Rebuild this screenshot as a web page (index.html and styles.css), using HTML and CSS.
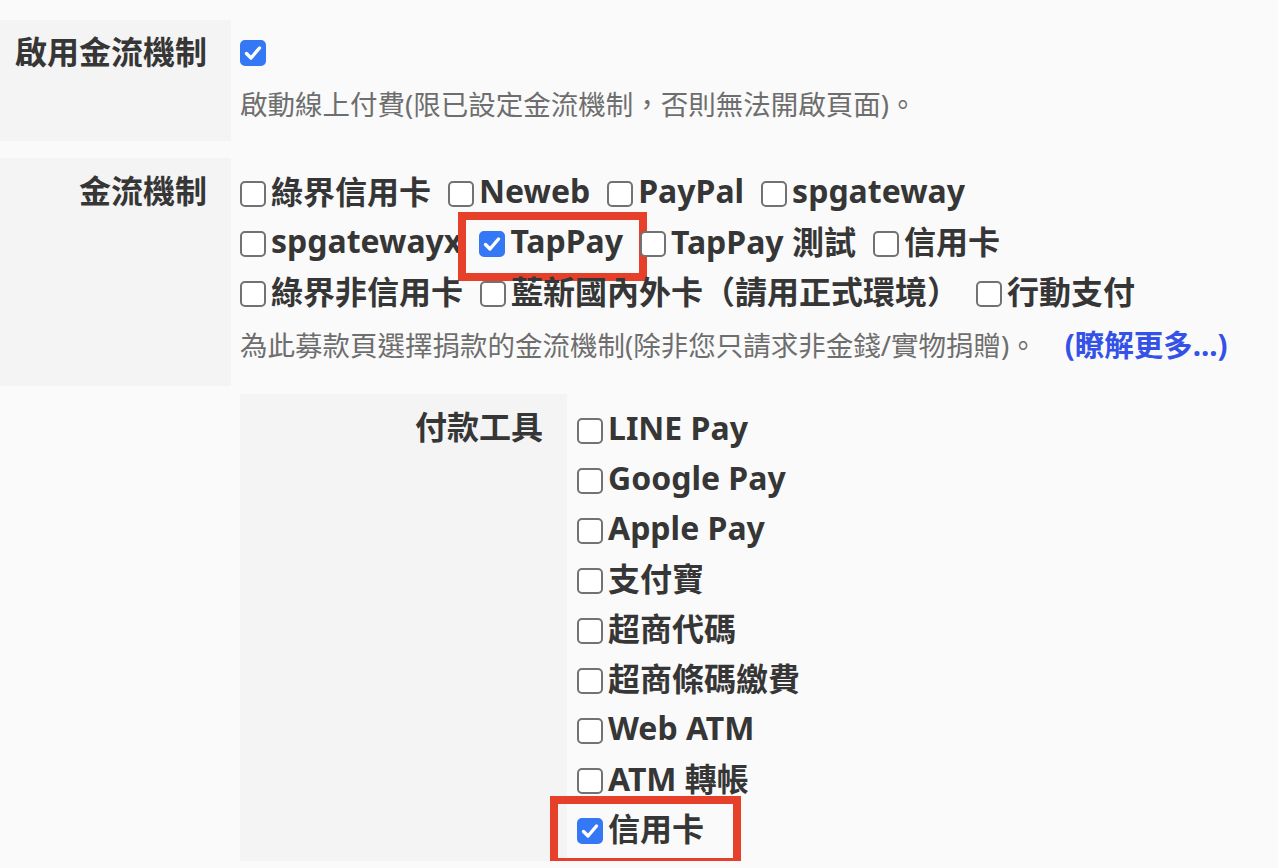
FILE: index.html
```html
<!DOCTYPE html>
<html lang="zh-Hant">
<head>
<meta charset="utf-8">
<title>金流機制</title>
<link rel="stylesheet" href="styles.css">
</head>
<body>
<div class="form">
  <div class="row row-enable">
    <div class="label">啟用金流機制</div>
    <div class="field">
      <div class="line"><span class="cb checked"><svg viewBox="0 0 26 26"><path d="M6.5 13.5l4.5 4.5 8.5-10" /></svg></span></div>
      <div class="help">啟動線上付費(限已設定金流機制，否則無法開啟頁面)。</div>
    </div>
  </div>

  <div class="row row-gateway">
    <div class="label">金流機制</div>
    <div class="field">
      <div class="opts">
        <label class="opt"><span class="cb"></span><span class="txt">綠界信用卡</span></label>
        <label class="opt"><span class="cb"></span><span class="txt">Neweb</span></label>
        <label class="opt"><span class="cb"></span><span class="txt">PayPal</span></label>
        <label class="opt"><span class="cb"></span><span class="txt">spgateway</span></label>
        <label class="opt"><span class="cb"></span><span class="txt">spgatewayx</span></label>
        <label class="opt mark mark-top"><span class="cb checked"><svg viewBox="0 0 26 26"><path d="M6.5 13.5l4.5 4.5 8.5-10" /></svg></span><span class="txt">TapPay</span></label>
        <label class="opt"><span class="cb"></span><span class="txt">TapPay 測試</span></label>
        <label class="opt"><span class="cb"></span><span class="txt">信用卡</span></label>
        <label class="opt"><span class="cb"></span><span class="txt">綠界非信用卡</span></label>
        <label class="opt"><span class="cb"></span><span class="txt">藍新國內外卡（請用正式環境）</span></label>
        <label class="opt"><span class="cb"></span><span class="txt">行動支付</span></label>
      </div>
      <div class="help help-gw">為此募款頁選擇捐款的金流機制(除非您只請求非金錢/實物捐贈)。<a class="more" href="#">(瞭解更多...)</a></div>
    </div>
  </div>

  <div class="row row-sub">
    <div class="blank"></div>
    <div class="field">
      <div class="sub">
        <div class="label sublabel">付款工具</div>
        <div class="list">
          <label class="opt"><span class="cb"></span><span class="txt">LINE Pay</span></label>
          <label class="opt"><span class="cb"></span><span class="txt">Google Pay</span></label>
          <label class="opt"><span class="cb"></span><span class="txt">Apple Pay</span></label>
          <label class="opt"><span class="cb"></span><span class="txt">支付寶</span></label>
          <label class="opt"><span class="cb"></span><span class="txt">超商代碼</span></label>
          <label class="opt"><span class="cb"></span><span class="txt">超商條碼繳費</span></label>
          <label class="opt"><span class="cb"></span><span class="txt">Web ATM</span></label>
          <label class="opt"><span class="cb"></span><span class="txt">ATM 轉帳</span></label>
          <label class="opt mark mark-bottom"><span class="cb checked"><svg viewBox="0 0 26 26"><path d="M6.5 13.5l4.5 4.5 8.5-10" /></svg></span><span class="txt">信用卡</span></label>
        </div>
      </div>
    </div>
  </div>
</div>
</body>
</html>
```
FILE: styles.css
```css
html, body {
  margin: 0;
  padding: 0;
  background: #fafafa;
}
body {
  font-family: "Noto Sans", "Noto Sans CJK TC", sans-serif;
  color: #363636;
  padding-top: 20px;
  overflow: hidden;
}
.row {
  display: grid;
  grid-template-columns: 231px 1fr;
}
.row-enable { margin-bottom: 17px; }
.row-gateway { margin-bottom: 8px; }

.label {
  background: #f4f4f4;
  text-align: right;
  font-size: 32px;
  font-weight: 700;
  line-height: 50px;
  padding-right: 24px;
  white-space: nowrap;
}
.row-enable .label { padding-top: 7px; }
.row-gateway .label { padding-top: 8px; }

.field {
  padding-left: 9px;
}
.row-enable .field { padding-top: 8px; padding-bottom: 16px; }
.row-gateway .field { padding-top: 9px; padding-bottom: 20px; }

.line {
  height: 50px;
  display: flex;
  align-items: center;
}

.cb {
  box-sizing: border-box;
  width: 26px;
  height: 26px;
  border: 2px solid #727272;
  border-radius: 5px;
  background: #fff;
  display: inline-block;
  flex: none;
  position: relative;
  top: 2px;
}
.line .cb { top: 0; }
.cb.checked {
  background: #3478f6;
  border-color: #3478f6;
}
.cb svg {
  position: absolute;
  left: -2px;
  top: -2px;
  width: 26px;
  height: 26px;
}
.cb svg path {
  fill: none;
  stroke: #fff;
  stroke-width: 3.4;
  stroke-linecap: round;
  stroke-linejoin: round;
}

.help {
  font-size: 27.5px;
  line-height: 40px;
  color: #6e6e6e;
  white-space: nowrap;
}
.row-enable .help { margin-top: 7px; }
.help-gw { margin-top: 8px; }
.more {
  color: #3451e8;
  font-weight: 700;
  font-size: 29.5px;
  text-decoration: none;
  margin-left: 28px;
}

.opts {
  display: flex;
  flex-wrap: wrap;
  width: 920px;
}
.opt {
  display: flex;
  align-items: center;
  height: 50px;
  font-size: 32px;
  font-weight: 700;
  color: #363636;
  margin-right: 17px;
  white-space: nowrap;
}
.opt .cb { margin-right: 5px; }
.opt .txt {
  position: relative;
  top: -2px;
}

.mark { position: relative; }
.mark::after {
  content: "";
  position: absolute;
  border: 8px solid #e6402a;
}
.mark-top::after {
  left: -21px;
  right: -24px;
  top: -5px;
  bottom: -14px;
}
.mark-bottom::after {
  left: -27px;
  right: -37px;
  top: -8px;
  bottom: -12px;
}

.sub {
  display: grid;
  grid-template-columns: 327px 1fr;
}
.sublabel {
  padding-top: 8px;
  padding-bottom: 7px;
}
.list {
  padding-left: 10px;
  padding-top: 10px;
  padding-bottom: 7px;
}
.list .opt {
  display: flex;
  width: max-content;
}
```
